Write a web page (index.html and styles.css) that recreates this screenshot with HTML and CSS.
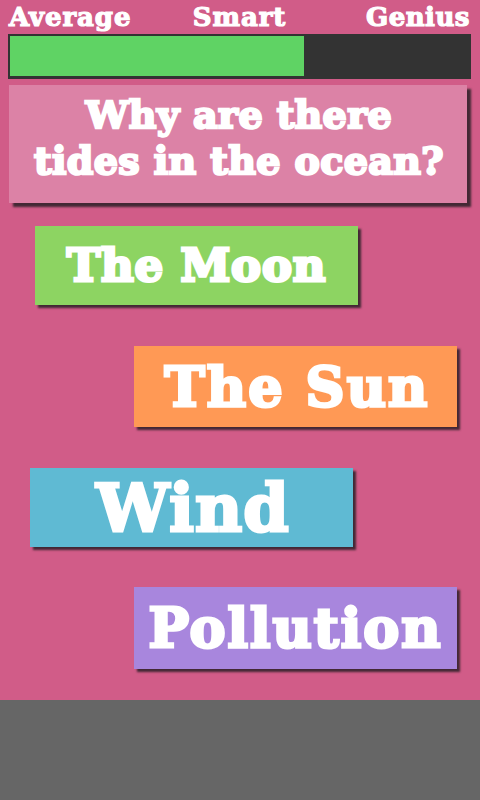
FILE: index.html
```html
<!DOCTYPE html>
<html lang="en">
<head>
  <meta charset="UTF-8">
  <meta name="viewport" content="width=device-width, initial-scale=1.0">
  <title>Quiz</title>
  <link rel="stylesheet" href="styles.css">
</head>
<body>

<div class="game">
  <div class="levels">
    <span>Average</span>
    <span>Smart</span>
    <span class="level-top">Genius</span>
  </div>
  <div class="progress">
    <div class="progress-fill"></div>
  </div>

  <div class="question">Why are there<br>tides in the ocean?</div>

  <div class="answer moon">The Moon</div>
  <div class="answer sun">The Sun</div>
  <div class="answer wind">Wind</div>
  <div class="answer pollution">Pollution</div>
</div>

<div class="ad-bar"></div>

</body>
</html>
```

FILE: styles.css
```css
* {
  box-sizing: border-box;
}

body {
  margin: 0;
  width: 480px;
  height: 800px;
  overflow: hidden;
  font-family: "DejaVu Serif", serif;
  font-weight: bold;
  color: #fff;
  background: #d15c88;
}

.game {
  height: 700px;
  padding-top: 2px;
}

.levels {
  display: grid;
  grid-template-columns: 1fr auto 1fr;
  height: 32px;
  margin: 0 10px 0 9px;
  font-size: 26px;
  line-height: 30px;
  letter-spacing: 0.9px;
  -webkit-text-stroke: 1.2px #fff;
}

.level-top {
  text-align: right;
  letter-spacing: 0.5px;
}

.progress {
  width: 463px;
  height: 45px;
  margin-left: 8px;
  border: 2px solid #333;
  border-bottom-width: 3px;
  background: #333;
}

.progress-fill {
  width: 294px;
  height: 100%;
  background: #5fd364;
}

.question {
  width: 458px;
  height: 118px;
  margin: 6px 0 0 9px;
  padding-top: 7px;
  padding-left: 2px;
  text-align: center;
  font-size: 38px;
  line-height: 46px;
  letter-spacing: 0.4px;
  -webkit-text-stroke: 2.4px #fff;
  background: #dc82a6;
  box-shadow: 4px 4px 2px rgba(51, 34, 43, 0.9);
}

.answer {
  display: flex;
  align-items: center;
  justify-content: center;
  width: 323px;
  box-shadow: 3px 3px 2px rgba(51, 34, 43, 0.9);
  -webkit-text-stroke: 3px #fff;
}

.moon {
  height: 79px;
  margin: 23px 0 0 35px;
  font-size: 45px;
  letter-spacing: 0.8px;
  background: #8dd462;
}

.sun {
  height: 81px;
  margin: 41px 0 0 134px;
  padding-left: 3px;
  font-size: 54px;
  letter-spacing: 2.1px;
  background: #ff9955;
}

.wind {
  height: 79px;
  margin: 41px 0 0 30px;
  padding-left: 3px;
  font-size: 65px;
  letter-spacing: 1px;
  background: #5fbad3;
}

.pollution {
  height: 82px;
  margin: 40px 0 0 134px;
  font-size: 54px;
  letter-spacing: 2px;
  background: #a886dd;
}

.ad-bar {
  height: 100px;
  background: #666;
}
```
